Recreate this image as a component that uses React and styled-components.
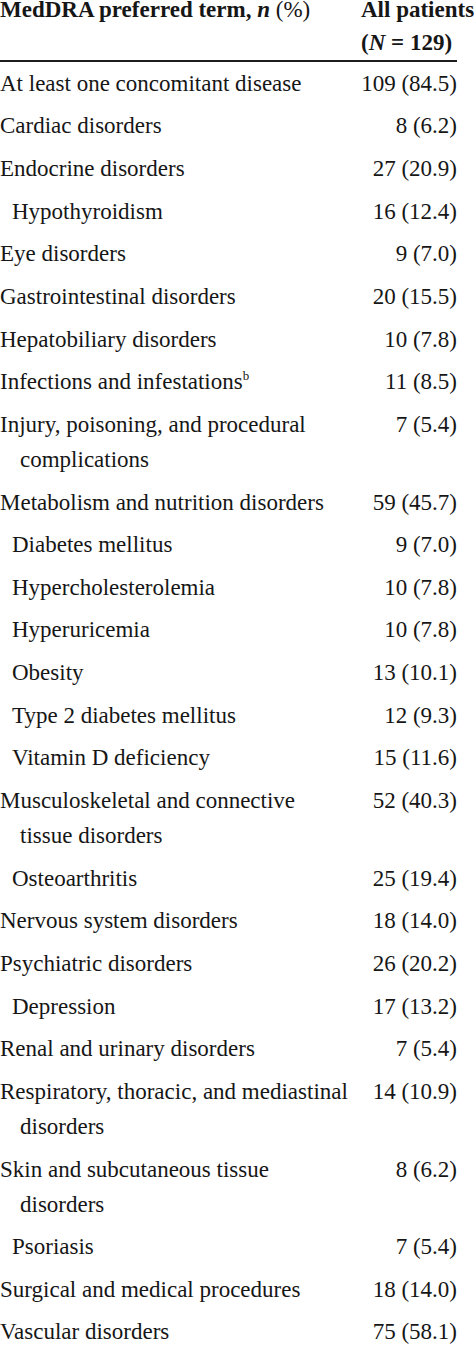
import { createGlobalStyle, styled } from "styled-components";

const GlobalStyle = createGlobalStyle`
  html, body {
    margin: 0;
    padding: 0;
    background: #ffffff;
    overflow: hidden;
  }
  body {
    font-family: "Liberation Serif", "Times New Roman", serif;
    color: #161616;
  }
`;

const Page = styled.div`
  width: 474px;
  height: 1349px;
  overflow: hidden;
`;

const Table = styled.table`
  width: 457px;
  margin-top: -7px;
  border-collapse: collapse;
  table-layout: fixed;
  font-size: 23px;
`;

const HeadCell = styled.th`
  padding: 0 0 1px 0;
  line-height: 33px;
  font-weight: 700;
  text-align: left;
  vertical-align: top;
  white-space: nowrap;
  border-bottom: 2px solid #1d1d1d;
`;

const Light = styled.span`
  font-weight: 400;
`;

const Cell = styled.td`
  padding: 3.8px 0 3.85px ${(p) => (p.$sub ? "12px" : "0")};
  line-height: 35px;
  vertical-align: top;
  white-space: nowrap;
  text-align: ${(p) => (p.$num ? "right" : "left")};
`;

const Line = styled.div`
  padding-left: ${(p) => (p.$cont ? "20px" : "0")};
`;

const Sup = styled.sup`
  font-size: 13px;
  line-height: 0;
  vertical-align: 9px;
`;

const rows = [
  { lines: ["At least one concomitant disease"], value: "109 (84.5)" },
  { lines: ["Cardiac disorders"], value: "8 (6.2)" },
  { lines: ["Endocrine disorders"], value: "27 (20.9)" },
  { lines: ["Hypothyroidism"], value: "16 (12.4)", sub: true },
  { lines: ["Eye disorders"], value: "9 (7.0)" },
  { lines: ["Gastrointestinal disorders"], value: "20 (15.5)" },
  { lines: ["Hepatobiliary disorders"], value: "10 (7.8)" },
  { lines: ["Infections and infestations"], value: "11 (8.5)", note: "b" },
  { lines: ["Injury, poisoning, and procedural", "complications"], value: "7 (5.4)" },
  { lines: ["Metabolism and nutrition disorders"], value: "59 (45.7)" },
  { lines: ["Diabetes mellitus"], value: "9 (7.0)", sub: true },
  { lines: ["Hypercholesterolemia"], value: "10 (7.8)", sub: true },
  { lines: ["Hyperuricemia"], value: "10 (7.8)", sub: true },
  { lines: ["Obesity"], value: "13 (10.1)", sub: true },
  { lines: ["Type 2 diabetes mellitus"], value: "12 (9.3)", sub: true },
  { lines: ["Vitamin D deficiency"], value: "15 (11.6)", sub: true },
  { lines: ["Musculoskeletal and connective", "tissue disorders"], value: "52 (40.3)" },
  { lines: ["Osteoarthritis"], value: "25 (19.4)", sub: true },
  { lines: ["Nervous system disorders"], value: "18 (14.0)" },
  { lines: ["Psychiatric disorders"], value: "26 (20.2)" },
  { lines: ["Depression"], value: "17 (13.2)", sub: true },
  { lines: ["Renal and urinary disorders"], value: "7 (5.4)" },
  { lines: ["Respiratory, thoracic, and mediastinal", "disorders"], value: "14 (10.9)" },
  { lines: ["Skin and subcutaneous tissue", "disorders"], value: "8 (6.2)" },
  { lines: ["Psoriasis"], value: "7 (5.4)", sub: true },
  { lines: ["Surgical and medical procedures"], value: "18 (14.0)" },
  { lines: ["Vascular disorders"], value: "75 (58.1)" },
];

function Row({ row }) {
  return (
    <tr>
      <Cell $sub={row.sub}>
        {row.lines.map((text, i) => (
          <Line key={i} $cont={i > 0}>
            {text}
            {i === 0 && row.note && <Sup>{row.note}</Sup>}
          </Line>
        ))}
      </Cell>
      <Cell $num>{row.value}</Cell>
    </tr>
  );
}

export default function App() {
  return (
    <Page>
      <GlobalStyle />
      <Table>
        <colgroup>
          <col style={{ width: "361px" }} />
          <col style={{ width: "96px" }} />
        </colgroup>
        <thead>
          <tr>
            <HeadCell>
              MedDRA preferred term, <i>n</i> <Light>(%)</Light>
            </HeadCell>
            <HeadCell>
              All patients
              <br />(<i>N</i> = 129)
            </HeadCell>
          </tr>
        </thead>
        <tbody>
          {rows.map((row) => (
            <Row key={row.lines[0]} row={row} />
          ))}
        </tbody>
      </Table>
    </Page>
  );
}
